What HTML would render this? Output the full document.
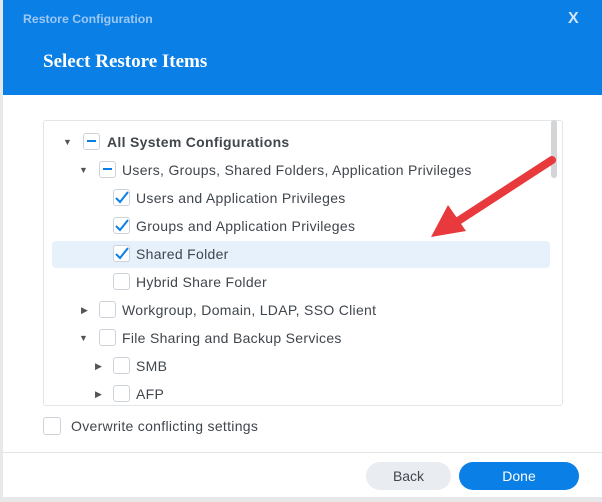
<!DOCTYPE html>
<html><head><style>
body{margin:0;width:602px;height:502px;background:#e6e8ea;position:relative;overflow:hidden;font-family:"Liberation Sans",sans-serif}
.dlg{position:absolute;left:3px;top:0;width:599px;height:497px;background:#fff}
.hdr{position:absolute;left:0;top:0;width:599px;height:95px;background:#0a7fe6}
.t1{position:absolute;left:20px;top:12px;color:#9cc8f4;font-weight:bold;font-size:12.3px}
.x{position:absolute;left:565px;top:10px;color:#cfe4fa;font-weight:bold;font-size:16px}
.t2{position:absolute;left:40px;top:51px;color:#fff;font-family:"Liberation Serif",serif;font-weight:bold;font-size:19px}
.tree{position:absolute;left:40px;top:120px;width:518px;height:284px;border:1px solid #e3e6e9;border-radius:3px}
.sb{position:absolute;left:548px;top:120px;width:6px;height:58px;background:#d3d5d7;border-radius:3px}
.hl{position:absolute;left:49px;top:241px;width:498px;height:27px;background:#e6f1fc;border-radius:4px}
.row{position:absolute;height:28px;font-size:14px;letter-spacing:0.3px;color:#40464d;line-height:28px;white-space:nowrap}
.cb{position:absolute;width:15px;height:15px;border:1px solid #cdd3d9;border-radius:3px;background:#fff;top:5px}
.cb.m::after{content:"";position:absolute;left:3px;top:6px;width:9px;height:2px;background:#0a7fe6}
.cb svg{position:absolute;left:0;top:0}
.tri{position:absolute;top:0;font-size:9px;color:#555}
.btn{position:absolute;top:462px;height:28px;border-radius:14px;font-size:14px;line-height:28px;text-align:center}
</style></head><body>
<div class="dlg">
<div class="hdr"><div class="t1">Restore Configuration</div><div class="x">X</div><div class="t2">Select Restore Items</div></div>
<div class="tree"></div>
<div class="sb"></div>
<div class="hl"></div>
</div>
<div style="position:absolute;left:0;top:0">
<div class="row" style="left:63px;top:128px;font-weight:bold"><span class="tri" style="left:0">▼</span><span class="cb m" style="left:20px"></span><span style="position:absolute;left:44px">All System Configurations</span></div>
<div class="row" style="left:79px;top:156px"><span class="tri">▼</span><span class="cb m" style="left:20px"></span><span style="position:absolute;left:43px">Users, Groups, Shared Folders, Application Privileges</span></div>
<div class="row" style="left:113px;top:184px"><span class="cb" style="left:0"><svg width="15" height="15"><path d="M2 8l4 4 8-10" stroke="#0a7fe6" stroke-width="2" fill="none"/></svg></span><span style="position:absolute;left:23px">Users and Application Privileges</span></div>
<div class="row" style="left:113px;top:212px"><span class="cb" style="left:0"><svg width="15" height="15"><path d="M2 8l4 4 8-10" stroke="#0a7fe6" stroke-width="2" fill="none"/></svg></span><span style="position:absolute;left:23px">Groups and Application Privileges</span></div>
<div class="row" style="left:113px;top:240px"><span class="cb" style="left:0"><svg width="15" height="15"><path d="M2 8l4 4 8-10" stroke="#0a7fe6" stroke-width="2" fill="none"/></svg></span><span style="position:absolute;left:23px">Shared Folder</span></div>
<div class="row" style="left:113px;top:268px"><span class="cb" style="left:0"></span><span style="position:absolute;left:23px">Hybrid Share Folder</span></div>
<div class="row" style="left:81px;top:296px"><span class="tri">▶</span><span class="cb" style="left:18px"></span><span style="position:absolute;left:41px">Workgroup, Domain, LDAP, SSO Client</span></div>
<div class="row" style="left:79px;top:324px"><span class="tri">▼</span><span class="cb" style="left:20px"></span><span style="position:absolute;left:43px">File Sharing and Backup Services</span></div>
<div class="row" style="left:95px;top:352px"><span class="tri">▶</span><span class="cb" style="left:18px"></span><span style="position:absolute;left:41px">SMB</span></div>
<div class="row" style="left:95px;top:380px"><span class="tri">▶</span><span class="cb" style="left:18px"></span><span style="position:absolute;left:41px">AFP</span></div>
<div class="row" style="left:43px;top:412px"><span class="cb" style="left:0;width:16px;height:16px"></span><span style="position:absolute;left:28px">Overwrite conflicting settings</span></div>
</div>
<div style="position:absolute;left:3px;top:452px;width:599px;height:1px;background:#e3e6e9"></div>
<div class="btn" style="left:366px;width:85px;background:#e9edf1;color:#40464d">Back</div>
<div class="btn" style="left:459px;width:120px;background:#0a7fe6;color:#fff">Done</div>
<svg style="position:absolute;left:0;top:0" width="602" height="502">
<path d="M552 160 L455 223" stroke="#e8393d" stroke-width="8" stroke-linecap="round"/>
<path d="M431 237 L448 205 L466 231 Z" fill="#e8393d"/>
</svg>
</body></html>
